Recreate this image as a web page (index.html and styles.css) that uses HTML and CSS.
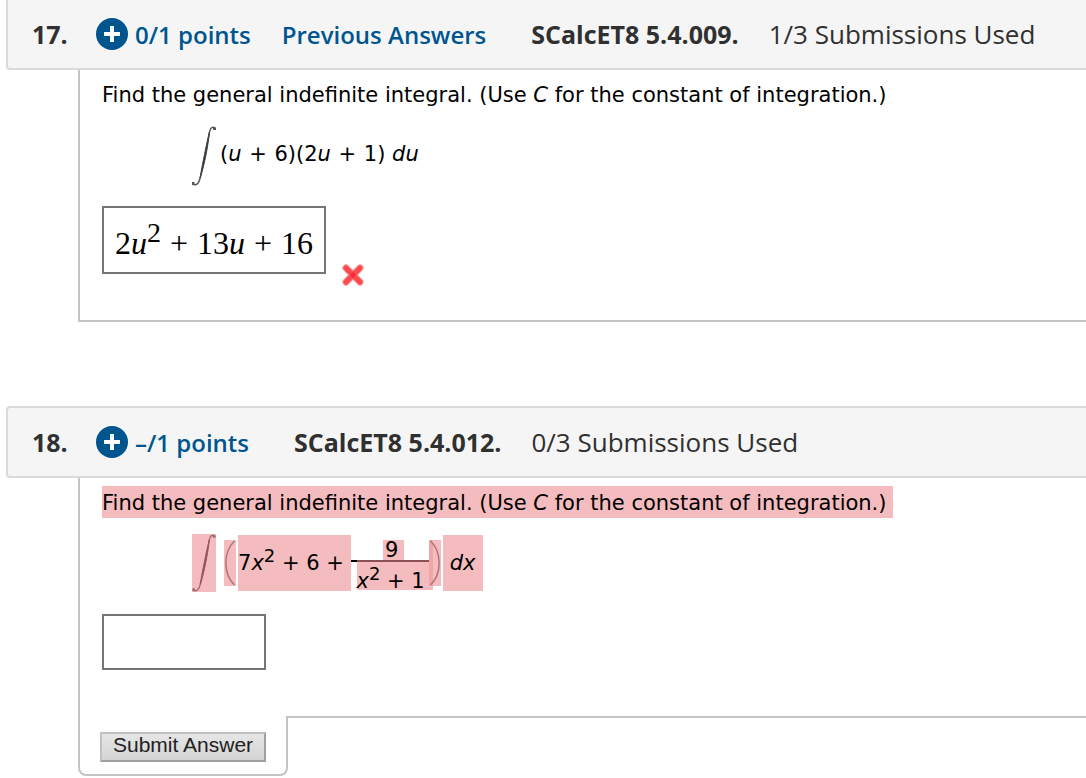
FILE: index.html
```html
<!DOCTYPE html>
<html lang="en">
<head>
  <meta charset="utf-8">
  <title>Homework</title>
  <link rel="stylesheet" href="styles.css">
</head>
<body>
  <section class="question">
    <div class="question-header first">
      <span class="number">17.</span>
      <a href="#" class="points">
        <svg class="plus" viewBox="0 0 32 32" aria-hidden="true">
          <circle cx="16" cy="16" r="16" fill="#00558f"/>
          <path d="M16 8v16M8 16h16" stroke="#fff" stroke-width="4"/>
        </svg>
        0/1 points
      </a>
      <a href="#" class="previous">Previous Answers</a>
      <span class="code">SCalcET8 5.4.009.</span>
      <span class="used">1/3 Submissions Used</span>
    </div>
    <div class="question-body closed">
      <p class="prompt"><span>Find the general indefinite integral. (Use <i>C</i> for the constant of integration.)</span></p>
      <div class="formula">
        <svg class="integral" viewBox="0 0 24 60" aria-label="integral">
          <path d="M23.5 2.5C20.5 0 18.5 1.5 17.5 6C15 18 12 38 8.500 51C7 57.500 4.500 60 0.500 58" fill="none" stroke="#555" stroke-width="1.4"/>
          <path d="M17.500 6C14.500 18 11 35 8 52C12 40 15.500 24 17.500 6z" fill="#333" stroke="#444" stroke-width="1"/>
          <path d="M21 1.500h3v2.500h-3zM0 56h2.500v3H0z" fill="#555"/>
        </svg>
        <span class="term">(<i>u</i><span class="op"> + </span>6)(2<i>u</i><span class="op"> + </span>1) <i>du</i></span>
      </div>
      <div class="answer-row">
        <div class="answer filled" role="textbox" contenteditable="true" aria-label="Answer to question 17" spellcheck="false">2<i>u</i><sup>2</sup><span class="op"> + </span>13<i>u</i><span class="op"> + </span>16</div>
        <svg class="wrong" viewBox="0 0 22 22" role="img" aria-label="Incorrect">
          <path d="M4 4L18 18M18 4L4 18" stroke="#fb8b8b" stroke-width="7" stroke-linecap="round"/>
          <path d="M4 4L18 18M18 4L4 18" stroke="#fb4a50" stroke-width="5" stroke-linecap="round"/>
          <path d="M8 11l3-3 3 3-3 3z" fill="#f52b33"/>
        </svg>
      </div>
    </div>
  </section>

  <section class="question">
    <div class="question-header">
      <span class="number">18.</span>
      <a href="#" class="points">
        <svg class="plus" viewBox="0 0 32 32" aria-hidden="true">
          <circle cx="16" cy="16" r="16" fill="#00558f"/>
          <path d="M16 8v16M8 16h16" stroke="#fff" stroke-width="4"/>
        </svg>
        –/1 points
      </a>
      <span class="code">SCalcET8 5.4.012.</span>
      <span class="used">0/3 Submissions Used</span>
    </div>
    <div class="question-body">
      <p class="prompt"><span class="marked">Find the general indefinite integral. (Use <i>C</i> for the constant of integration.) </span></p>
      <div class="formula tall">
        <svg class="integral marked" viewBox="0 0 24 60" aria-label="integral">
          <path d="M23.5 2.5C20.5 0 18.5 1.5 17.5 6C15 18 12 38 8.500 51C7 57.500 4.500 60 0.500 58" fill="none" stroke="#a5686c" stroke-width="1.4"/>
          <path d="M17.500 6C14.500 18 11 35 8 52C12 40 15.500 24 17.500 6z" fill="#8c5054" stroke="#95595d" stroke-width="1"/>
          <path d="M21 1.500h3v2.500h-3zM0 56h2.500v3H0z" fill="#a5686c"/>
        </svg>
        <svg class="paren left marked" viewBox="0 0 12 46" aria-label="(">
          <path d="M10.500 1C-1 12-1 34 10.500 45" fill="none" stroke="#b07276" stroke-width="1.5"/>
        </svg>
        <span class="term marked">7<i>x</i><sup>2</sup> + 6 + </span>
        <span class="fraction">
          <span class="top"><span class="marked">9</span></span>
          <span class="bar"></span>
          <span class="bottom"><span class="marked"><i>x</i><sup>2</sup> + 1</span></span>
        </span>
        <svg class="paren right marked" viewBox="0 0 12 46" aria-label=")">
          <path d="M0 0h4v46H0z" fill="#f0a5a8"/>
          <path d="M1.500 1C13 12 13 34 1.500 45" fill="none" stroke="#b07276" stroke-width="1.5"/>
        </svg>
        <span class="term dx marked"><i>dx</i></span>
      </div>
      <input class="answer" type="text" aria-label="Answer to question 18">
    </div>
    <div class="question-footer">
      <div class="submit-tab">
        <button type="button" class="submit">Submit Answer</button>
      </div>
      <div class="rule"></div>
    </div>
  </section>
</body>
</html>
```
FILE: styles.css
```css
body {
  margin: 0;
  background: #fff;
  color: #000;
  font-family: Verdana, "DejaVu Sans", sans-serif;
  font-size: 21px;
  overflow-x: hidden;
}

.question {
  margin: 0 0 84px 6px;
}

.question:last-child {
  margin-bottom: 0;
}

/* header bar */
.question-header {
  display: flex;
  align-items: center;
  box-sizing: border-box;
  height: 72px;
  padding-left: 24px;
  border: 2px solid #dadada;
  border-right: 0;
  border-radius: 4px 0 0 4px;
  background: #f5f5f5;
  color: #303030;
  font-family: "Open Sans", sans-serif;
  font-size: 25px;
  white-space: nowrap;
}

.question-header.first {
  height: 70px;
  border-top: 0;
  border-radius: 0 0 0 4px;
}

.question-header a {
  color: #00558f;
  font-size: 24px;
  font-weight: 600;
  text-decoration: none;
}

.number {
  width: 64px;
  font-weight: 700;
}

.points {
  display: flex;
  align-items: center;
  gap: 7px;
}

.plus {
  width: 32px;
  height: 32px;
}

.previous {
  margin-left: 31px;
}

.code {
  margin-left: 45px;
  font-weight: 700;
}

.used {
  margin-left: 30px;
  font-size: 26px;
}

/* question content */
.question-body {
  display: flex;
  flex-direction: column;
  align-items: flex-start;
  margin-left: 72px;
  padding: 8px 0 46px 22px;
  border-left: 2px solid #c4c4c4;
}

.question-body.closed {
  padding-bottom: 34px;
  border-bottom: 2px solid #c4c4c4;
}

.prompt {
  margin: 0;
  line-height: 34px;
}

.prompt span {
  display: block;
  height: 32px;
  white-space: pre-wrap;
}

.marked {
  background: #f4bcbf;
}

.op {
  margin: 0 1px;
}

.formula {
  display: flex;
  align-items: center;
  margin: 16px 0 20px 90px;
  white-space: pre;
}

.formula.tall {
  height: 58px;
  margin-bottom: 22px;
}

.integral {
  width: 24px;
  height: 60px;
  margin-right: 4px;
}

.term {
  padding-bottom: 4px;
}

.tall .integral {
  height: 58px;
  margin-right: 8px;
}

.tall .term {
  padding-bottom: 0;
  line-height: 56px;
}

.formula sup {
  font-size: 18px;
  line-height: 0;
  vertical-align: 8px;
}

.paren {
  width: 12px;
  height: 46px;
}

.paren.left {
  margin-right: 2px;
}

.paren.right {
  margin: 0 2px 0 -4px;
}

.fraction {
  display: flex;
  flex-direction: column;
  margin-top: 4px;
  line-height: 20px;
}

.fraction .top {
  padding-left: 4px;
  text-align: center;
}

.fraction .top span {
  display: inline-block;
  padding: 0 6px 0 2px;
}

.fraction .bar {
  height: 2px;
  margin-right: 4px;
  border-left: 6px solid #000;
  background: #8a5054;
}

.fraction .bottom {
  padding-left: 6px;
  line-height: 18px;
}

.fraction .bottom span {
  display: block;
  padding: 10px 8px 0 0;
}

.term.dx {
  padding: 0 7px;
}

/* answers */
.answer-row {
  display: flex;
  align-items: flex-end;
  gap: 16px;
}

.answer {
  box-sizing: border-box;
  width: 164px;
  height: 56px;
  padding: 0 11px;
  border: 2px solid #757575;
  border-radius: 0;
  background: #fff;
  font-family: "Liberation Serif", serif;
  font-size: 32px;
}

.answer.filled {
  width: auto;
  height: 68px;
  margin-bottom: 12px;
  line-height: 70px;
  white-space: pre;
}

.answer sup {
  font-size: 28px;
  line-height: 0;
  vertical-align: 12px;
}

.wrong {
  width: 22px;
  height: 22px;
}

/* submit tab */
.question-footer {
  display: flex;
  margin-left: 72px;
}

.submit-tab {
  padding: 16px 20px 12px;
  border: 2px solid #c4c4c4;
  border-top: 0;
  border-radius: 0 0 8px 8px;
}

.rule {
  flex: 1;
  border-top: 2px solid #c4c4c4;
}

.submit {
  display: block;
  height: 30px;
  padding: 0 11px 4px;
  border: 2px solid;
  border-color: #c0c0c0 #a0a0a0 #a0a0a0 #c0c0c0;
  background: linear-gradient(#e6e6e6, #d4d4d4);
  color: #222;
  font-family: "Liberation Sans", Arial, sans-serif;
  font-size: 21px;
  line-height: 22px;
}
```
